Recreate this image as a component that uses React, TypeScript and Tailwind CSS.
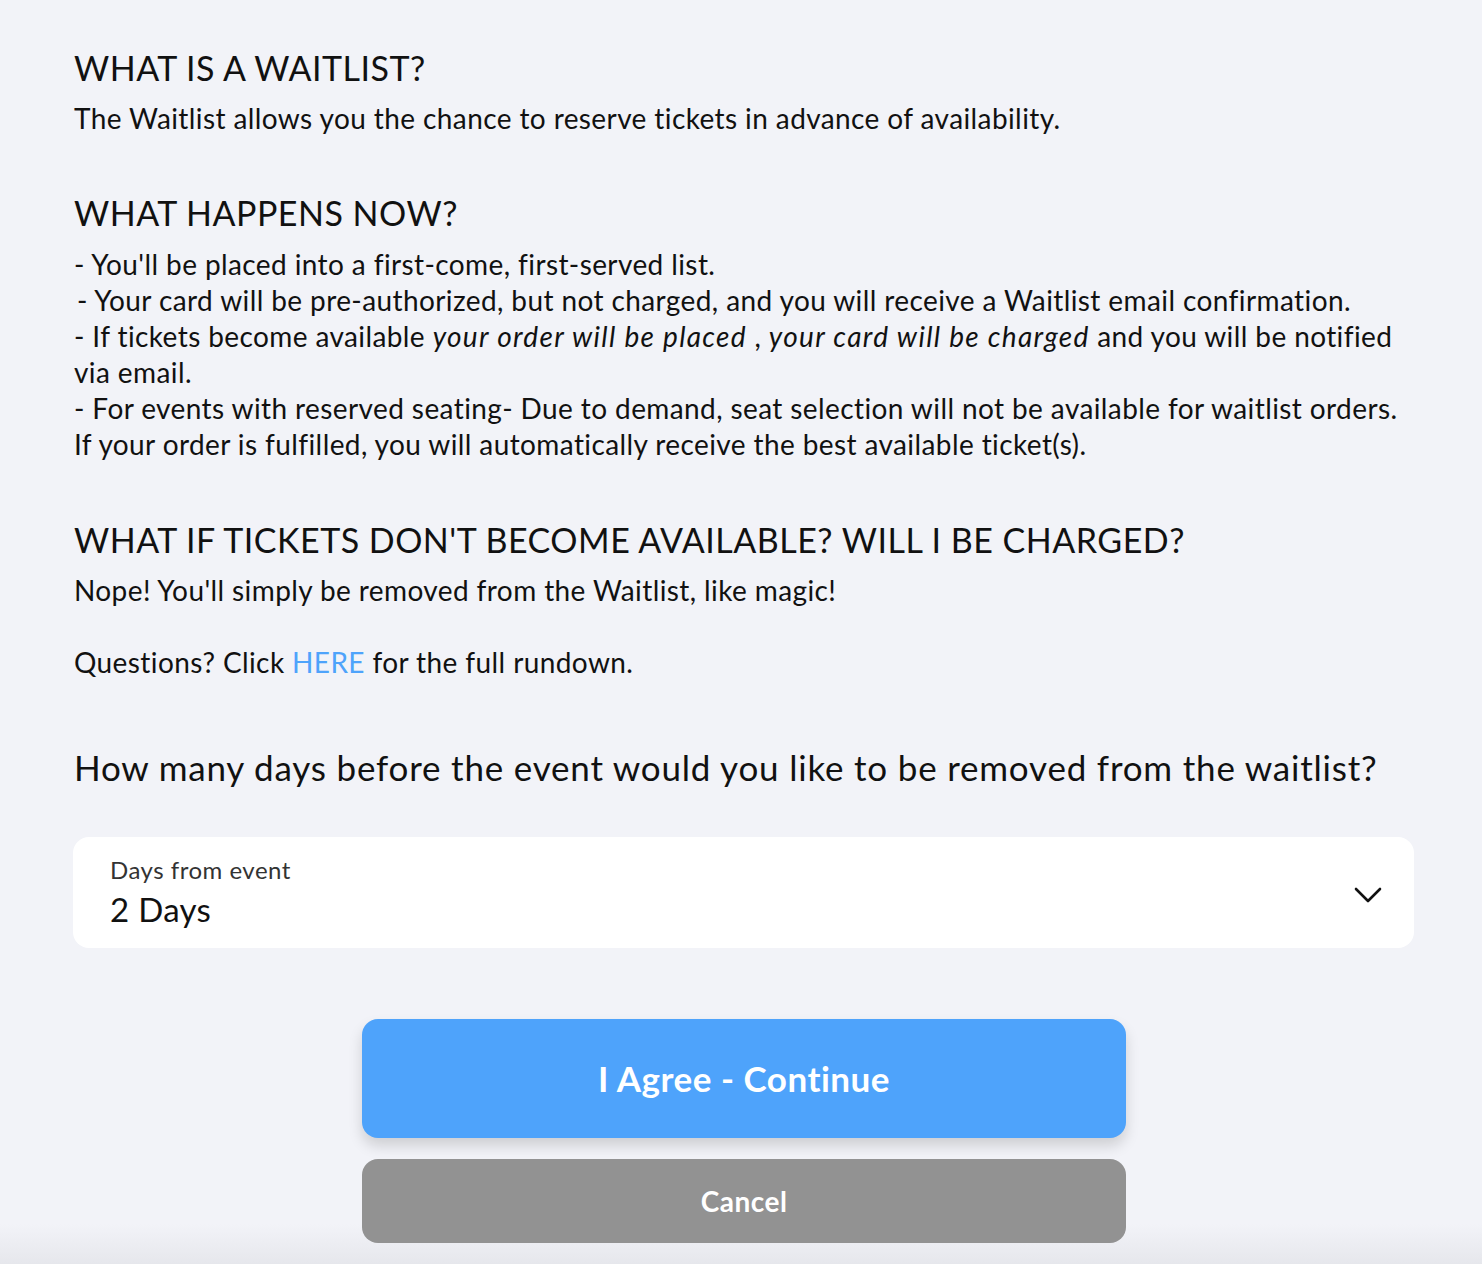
export default function App() {
    return (
        <div className="relative h-[1264px] overflow-hidden bg-[#f2f3f8] text-[#111] font-['Lato','Noto_Sans',sans-serif]">
            <div className="absolute bottom-0 left-0 right-0 h-[40px] bg-gradient-to-b from-transparent to-[#e6e7ec]" />
            <div className="relative pl-[74px] pr-[68px] pt-[46px]">
                <h2 className="text-[34px] leading-[44px] tracking-[0.5px]">WHAT IS A WAITLIST?</h2>
                <p className="mt-[10px] text-[28px] leading-[36px] tracking-[0.4px]">The Waitlist allows you the chance to reserve tickets in advance of availability.</p>

                <h2 className="mt-[55px] text-[34px] leading-[44px] tracking-[0.5px]">WHAT HAPPENS NOW?</h2>
                <div className="mt-[11px] text-[28px] leading-[36px] tracking-[0.4px]">
                    <p>- You'll be placed into a first-come, first-served list.</p>
                    <p className="pl-[3px]">- Your card will be pre-authorized, but not charged, and you will receive a Waitlist email confirmation.</p>
                    <p>- If tickets become available <i className="tracking-[1.3px]">your order will be placed</i> , <i className="tracking-[1.3px]">your card will be charged</i> and you will be notified via email.</p>
                    <p>- For events with reserved seating- Due to demand, seat selection will not be available for waitlist orders. If your order is fulfilled, you will automatically receive the best available ticket(s).</p>
                </div>

                <h2 className="mt-[56px] text-[34px] leading-[44px] tracking-[0.5px]">WHAT IF TICKETS DON'T BECOME AVAILABLE? WILL I BE CHARGED?</h2>
                <p className="mt-[10px] text-[28px] leading-[36px] tracking-[0.4px]">Nope! You'll simply be removed from the Waitlist, like magic!</p>
                <p className="mt-[36px] text-[28px] leading-[36px] tracking-[0.4px]">Questions? Click <a href="#" className="text-[#4ea3fb]">HERE</a> for the full rundown.</p>

                <p className="mt-[65px] text-[35px] leading-[44px] tracking-[0.8px]">How many days before the event would you like to be removed from the waitlist?</p>

                <div className="mt-[48px] -ml-[1px] flex justify-between rounded-2xl bg-white h-[111px] pl-[37px] pr-[32px]">
                    <div className="flex flex-col pt-[18px]">
                        <span className="text-[24px] leading-[30px] tracking-[0.5px] text-[#333]">Days from event</span>
                        <span className="mt-[4px] text-[33px] leading-[40px] tracking-[0.3px]">2 Days</span>
                    </div>
                    <svg width="28" height="16" viewBox="0 0 28 16" className="self-center mt-[4px]" fill="none" stroke="#111" strokeWidth="2.6" strokeLinecap="round" strokeLinejoin="round">
                        <polyline points="2,2 14,14 26,2" />
                    </svg>
                </div>

                <div className="mt-[71px] flex flex-col items-center gap-[21px]">
                    <button className="w-[764px] h-[119px] rounded-[16px] bg-[#4ea3fb] text-white text-[35px] tracking-[0.5px] font-bold shadow-[0_8px_14px_rgba(0,0,0,0.15)]">I Agree - Continue</button>
                    <button className="w-[764px] h-[84px] rounded-[16px] bg-[#929292] text-white text-[28px] tracking-[0.5px] font-bold">Cancel</button>
                </div>
            </div>
        </div>
    );
}
